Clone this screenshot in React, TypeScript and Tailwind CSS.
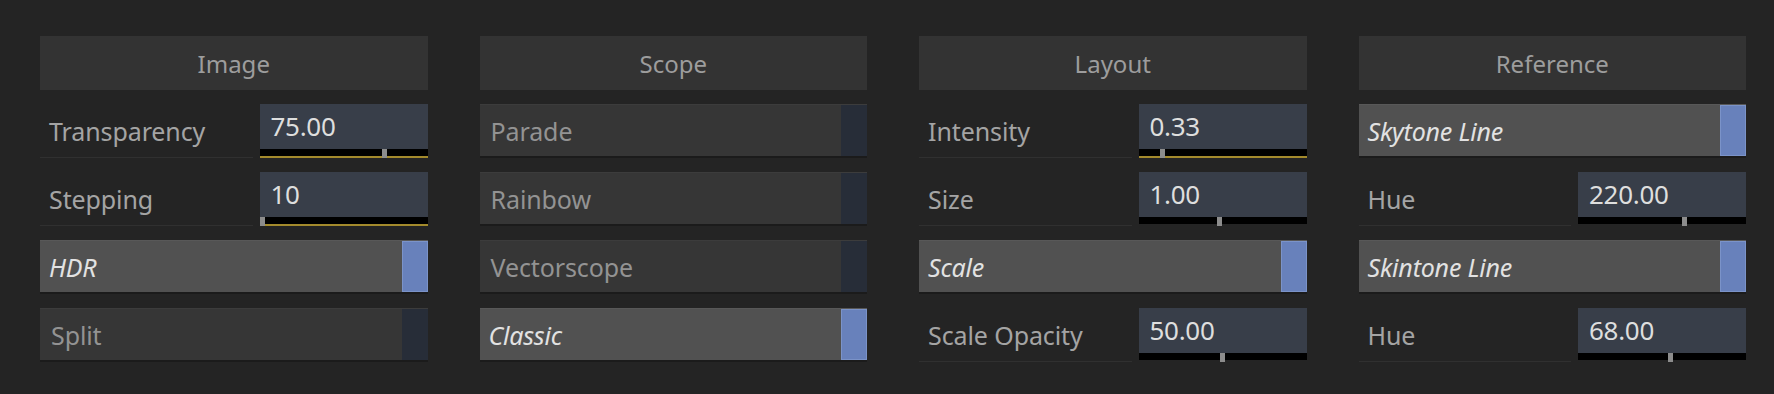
import React from 'react'

type Row =
  | { kind: 'value'; label: string; value: string; pos: number; touched?: boolean }
  | { kind: 'toggle'; label: string; on: boolean }

const panels: { title: string; rows: Row[] }[] = [
  {
    title: 'Image',
    rows: [
      { kind: 'value', label: 'Transparency', value: '75.00', pos: 0.75, touched: true },
      { kind: 'value', label: 'Stepping', value: '10', pos: 0, touched: true },
      { kind: 'toggle', label: 'HDR', on: true },
      { kind: 'toggle', label: 'Split', on: false },
    ],
  },
  {
    title: 'Scope',
    rows: [
      { kind: 'toggle', label: 'Parade', on: false },
      { kind: 'toggle', label: 'Rainbow', on: false },
      { kind: 'toggle', label: 'Vectorscope', on: false },
      { kind: 'toggle', label: 'Classic', on: true },
    ],
  },
  {
    title: 'Layout',
    rows: [
      { kind: 'value', label: 'Intensity', value: '0.33', pos: 0.13, touched: true },
      { kind: 'value', label: 'Size', value: '1.00', pos: 0.48 },
      { kind: 'toggle', label: 'Scale', on: true },
      { kind: 'value', label: 'Scale Opacity', value: '50.00', pos: 0.5 },
    ],
  },
  {
    title: 'Reference',
    rows: [
      { kind: 'toggle', label: 'Skytone Line', on: true },
      { kind: 'value', label: 'Hue', value: '220.00', pos: 0.64 },
      { kind: 'toggle', label: 'Skintone Line', on: true },
      { kind: 'value', label: 'Hue', value: '68.00', pos: 0.55 },
    ],
  },
]

function ValueRow({ label, value, pos, touched }: { label: string; value: string; pos: number; touched?: boolean }) {
  return (
    <div className="flex h-[54px] gap-[7px]">
      <div className="flex flex-1 items-center border-b border-[#303030] pl-[9px] pt-[2px] text-[25px] tracking-[-0.1px] text-[#a4a4a4]">
        {label}
      </div>
      <div className="flex w-[168px] flex-col">
        <div className="flex h-[45px] items-center bg-[#383e49] pl-[11px] pb-[1px] text-[26px] tracking-[-0.3px] text-[#dedede]">
          {value}
        </div>
        <div className="relative h-[7px] bg-black">
          <div
            className="absolute top-0 h-[9px] w-[5px] bg-[#8c8c8c]"
            style={{ left: `calc(${pos * 100}% - ${pos * 5}px)` }}
          />
        </div>
        <div className={touched ? 'h-[2px] bg-[#a38a2c]' : 'h-[2px]'} />
      </div>
    </div>
  )
}

function ToggleRow({ label, on }: { label: string; on: boolean }) {
  return (
    <div
      className={
        on
          ? 'flex h-[54px] border-t border-[#585858] border-b-2 border-b-[#1b1b1b] bg-[#515151]'
          : 'flex h-[54px] border-t border-[#3c3c3c] border-b-2 border-b-[#1b1b1b] bg-[#363636]'
      }
    >
      <div
        className={
          on
            ? 'flex flex-1 items-center pl-[9px] pt-[2px] text-[25px] italic tracking-[-0.2px] text-[#e2e2e2]'
            : 'flex flex-1 items-center pl-[11px] pt-[2px] text-[25px] tracking-[-0.1px] text-[#939393]'
        }
      >
        {label}
      </div>
      <div className={on ? 'w-[26px] border border-[#7b93c8] bg-[#6881bb]' : 'w-[26px] bg-[#272d38]'} />
    </div>
  )
}

export default function App() {
  return (
    <div
      className="h-[394px] w-[1774px] bg-[#242424] pl-[40px] pt-[36px]"
      style={{ fontFamily: '"Noto Sans", "Open Sans", sans-serif' }}
    >
      <div className="grid w-[1706px] grid-cols-4 gap-x-[52px]">
        {panels.map((panel) => (
          <div key={panel.title} className="flex flex-col gap-[14px]">
            <div className="flex h-[54px] items-center justify-center bg-[#333333] pt-[1px] text-[24px] text-[#9d9d9d]">
              {panel.title}
            </div>
            {panel.rows.map((row, i) =>
              row.kind === 'value' ? (
                <ValueRow key={i} label={row.label} value={row.value} pos={row.pos} touched={row.touched} />
              ) : (
                <ToggleRow key={i} label={row.label} on={row.on} />
              )
            )}
          </div>
        ))}
      </div>
    </div>
  )
}
